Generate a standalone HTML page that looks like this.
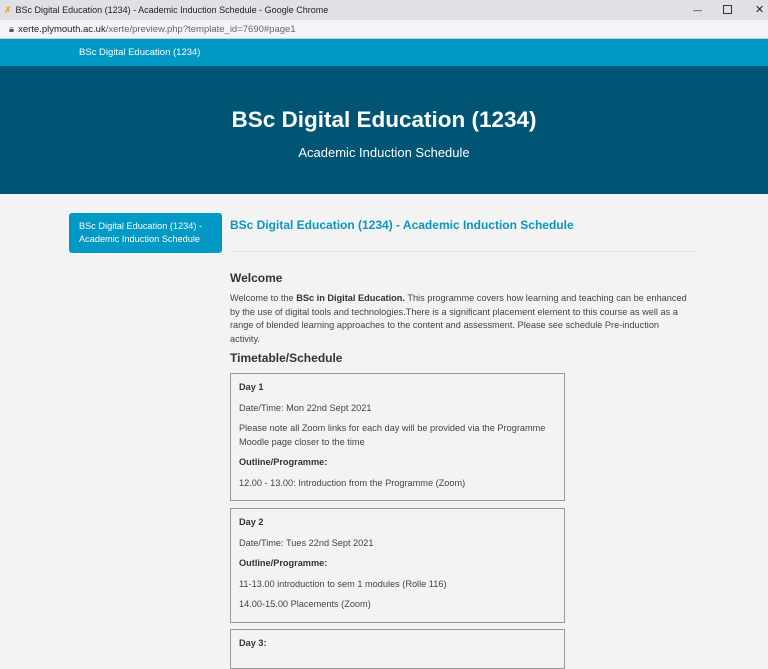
<!DOCTYPE html>
<html><head><style>
*{margin:0;padding:0;box-sizing:border-box}
body{width:768px;height:651px;overflow:hidden;background:#f3f3f3;font-family:"Liberation Sans",Arial,sans-serif;color:#444;position:relative}
.abs{position:absolute}
.tb{left:0;top:0;width:768px;height:20px;background:#dfe1e5;font-size:9px;color:#222;line-height:20px}
.ab{left:0;top:20px;width:768px;height:19px;background:#f3f4f5;font-size:9.5px;line-height:19px;color:#666;border-bottom:1px solid #ccc}
.nav{left:0;top:39px;width:768px;height:27px;background:#0098c4;color:#fff;font-size:9.5px;line-height:27px}
.hd{left:0;top:66px;width:768px;height:128px;background:#005575;color:#fff;text-align:center}
.side{left:69px;top:213px;width:153px;height:40px;background:#0099c6;border-radius:3px;color:#fff;font-size:9.2px;line-height:13px;padding:7px 10px}
p{font-size:9.2px;line-height:13.5px}
.box{position:absolute;left:230px;width:335px;border:1px solid #999;padding:0 8px}
.box p{margin-top:7px}
b{color:#333}
</style></head><body>
<div class="abs tb"><span style="color:#f0a030;margin-left:4px;font-weight:bold">✗</span><span style="margin-left:4px">BSc Digital Education (1234) - Academic Induction Schedule - Google Chrome</span>
<span class="abs" style="left:693px;top:0">—</span><span class="abs" style="left:723px;top:5px;width:9px;height:9px;border:1px solid #333"></span><span class="abs" style="left:755px;top:0;font-size:11px">✕</span></div>
<div class="abs ab"><span style="margin-left:9px;color:#555">🔒︎</span><span style="margin-left:4px"><span style="color:#222">xerte.plymouth.ac.uk</span>/xerte/preview.php?template_id=7690#page1</span></div>
<div class="abs nav"><span style="margin-left:79px">BSc Digital Education (1234)</span></div>
<div class="abs hd"><div style="font-size:22.5px;font-weight:bold;margin-top:41px">BSc Digital Education (1234)</div><div style="font-size:13px;margin-top:12px">Academic Induction Schedule</div></div>
<div class="abs side">BSc Digital Education (1234) -<br>Academic Induction Schedule</div>
<div class="abs" style="left:230px;top:218px;font-size:12px;font-weight:bold;color:#0a96c2">BSc Digital Education (1234) - Academic Induction Schedule</div>
<div class="abs" style="left:230px;top:251px;width:466px;border-top:1px solid #e6e6e6"></div>
<div class="abs" style="left:230px;top:271px;font-size:12px;font-weight:bold;color:#333">Welcome</div>
<div class="abs" style="left:230px;top:292px;width:520px;white-space:nowrap"><p>Welcome to the <b>BSc in Digital Education.</b> This programme covers how learning and teaching can be enhanced<br>by the use of digital tools and technologies.There is a significant placement element to this course as well as a<br>range of blended learning approaches to the content and assessment. Please see schedule Pre-induction<br>activity.</p></div>
<div class="abs" style="left:230px;top:351px;font-size:12px;font-weight:bold;color:#333">Timetable/Schedule</div>
<div class="box" style="top:373px;height:128px"><p><b>Day 1</b></p><p>Date/Time: Mon 22nd Sept 2021</p><p>Please note all Zoom links for each day will be provided via the Programme Moodle page closer to the time</p><p><b>Outline/Programme:</b></p><p>12.00 - 13.00: Introduction from the Programme (Zoom)</p></div>
<div class="box" style="top:508px;height:115px"><p><b>Day 2</b></p><p>Date/Time: Tues 22nd Sept 2021</p><p><b>Outline/Programme:</b></p><p>11-13.00 introduction to sem 1 modules (Rolle 116)</p><p>14.00-15.00 Placements (Zoom)</p></div>
<div class="box" style="top:629px;height:40px"><p><b>Day 3:</b></p></div>
</body></html>
